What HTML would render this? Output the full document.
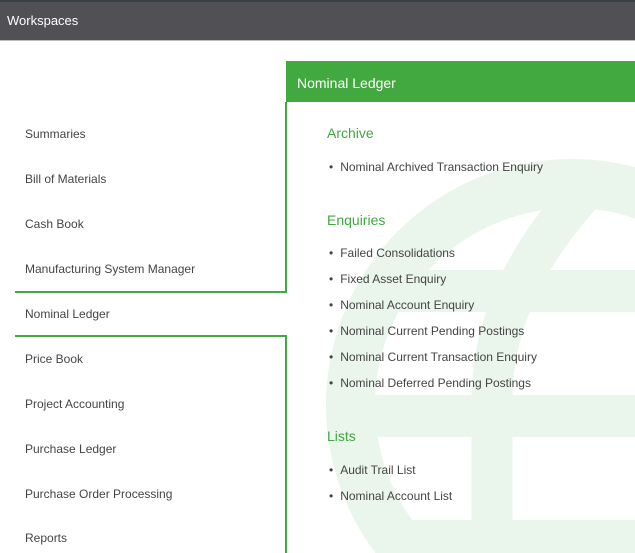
<!DOCTYPE html>
<html><head><style>
html,body{margin:0;width:635px;height:553px;overflow:hidden}
body{background:#fff;font-family:"Liberation Sans",sans-serif;position:relative}
.top{position:absolute;left:0;top:0;width:635px;height:40px;background:#505055;border-bottom:1px solid #bbb}
.top:before{content:"";position:absolute;left:0;top:0;width:635px;height:2px;background:#3a4048}
.top span{position:absolute;left:7px;top:13px;color:#fff;font-size:13px}
.hdr{position:absolute;left:286px;top:61px;width:349px;height:41px;background:#42a840;color:#fff;font-size:14px}
.hdr span{position:absolute;left:11px;top:14px}
.l{position:absolute;left:25px;font-size:12px;color:#444}
.g{position:absolute;background:#42a840}
.h{position:absolute;left:327px;font-size:14px;color:#42a840}
.i{position:absolute;left:329px;font-size:12px;color:#444;white-space:nowrap}
.i:before{content:"•";margin-right:7px;font-size:12px}
</style></head><body>
<svg style="position:absolute;left:0;top:0" width="635" height="553">
<defs><clipPath id="c"><circle cx="572" cy="405" r="246"/></clipPath></defs>
<g clip-path="url(#c)" fill="none" stroke="#eaf5ec">
<circle cx="572" cy="405" r="222" stroke-width="50"/>
<path d="M605 170 Q492 280 492 400 L492 560" stroke-width="41"/>
</g>
<g clip-path="url(#c)" fill="#eaf5ec">
<rect x="320" y="270" width="320" height="42"/>
<rect x="320" y="395" width="320" height="42"/>
<rect x="320" y="520" width="320" height="40"/>
</g>
</svg>
<div class="top"><span>Workspaces</span></div>
<div class="hdr"><span>Nominal Ledger</span></div>
<div class="g" style="left:285px;top:102px;width:2px;height:191px"></div>
<div class="g" style="left:15px;top:291px;width:272px;height:2px"></div>
<div class="g" style="left:15px;top:335px;width:272px;height:2px"></div>
<div class="g" style="left:285px;top:335px;width:2px;height:218px"></div>
<div class="l" style="top:127px">Summaries</div>
<div class="l" style="top:172px">Bill of Materials</div>
<div class="l" style="top:217px">Cash Book</div>
<div class="l" style="top:262px">Manufacturing System Manager</div>
<div class="l" style="top:307px">Nominal Ledger</div>
<div class="l" style="top:352px">Price Book</div>
<div class="l" style="top:397px">Project Accounting</div>
<div class="l" style="top:442px">Purchase Ledger</div>
<div class="l" style="top:487px">Purchase Order Processing</div>
<div class="l" style="top:531px">Reports</div>
<div class="h" style="top:125px">Archive</div>
<div class="i" style="top:160px">Nominal Archived Transaction Enquiry</div>
<div class="h" style="top:212px">Enquiries</div>
<div class="i" style="top:246px">Failed Consolidations</div>
<div class="i" style="top:272px">Fixed Asset Enquiry</div>
<div class="i" style="top:298px">Nominal Account Enquiry</div>
<div class="i" style="top:324px">Nominal Current Pending Postings</div>
<div class="i" style="top:350px">Nominal Current Transaction Enquiry</div>
<div class="i" style="top:376px">Nominal Deferred Pending Postings</div>
<div class="h" style="top:428px">Lists</div>
<div class="i" style="top:463px">Audit Trail List</div>
<div class="i" style="top:489px">Nominal Account List</div>
</body></html>
